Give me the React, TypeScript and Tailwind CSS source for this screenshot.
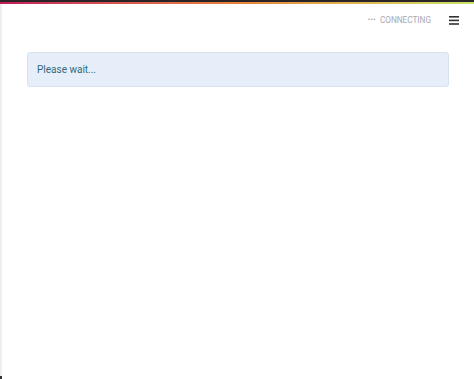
import React from 'react';

function MenuIcon() {
  return (
    <svg width="10" height="9" viewBox="0 0 10 9" className="text-[#333]">
      <rect x="0" y="0" width="10" height="1.6" fill="currentColor" />
      <rect x="0" y="3.6" width="10" height="1.6" fill="currentColor" />
      <rect x="0" y="7.2" width="10" height="1.6" fill="currentColor" />
    </svg>
  );
}

export default function App() {
  return (
    <div className="relative h-[379px] w-[474px] overflow-hidden bg-white font-['Roboto',sans-serif]">
      {/* top accent bar */}
      <div className="h-[2px] bg-[#2b2426]" />
      <div className="h-[2px] bg-gradient-to-r from-[#c2185b] via-[#e8833a] to-[#c6e36a]" />

      <div className="flex h-[375px] border-l-2 border-[#eeeeee]">
        <div className="flex flex-1 flex-col">
          {/* header */}
          <div className="flex h-[31px] items-center justify-end pr-[15px] pt-[1px]">
            <div className="flex items-center gap-[4px] text-[8.2px] text-[#a9a9b2]">
              <span className="text-[8px] leading-none tracking-[0.02em]">•••</span>
              <span>CONNECTING</span>
            </div>
            <div className="ml-[18px]">
              <MenuIcon />
            </div>
          </div>

          {/* status */}
          <div className="mx-[25px] mt-[17px] flex h-[35px] items-center rounded-[3px] border border-[#d6e2ef] bg-[#e5eef9] px-[9px] text-[10px] text-[#35697a]">
            Please wait...
          </div>
        </div>
      </div>
      <div className="absolute bottom-0 left-0 h-[3px] w-[2px] bg-[#333]" />
    </div>
  );
}
